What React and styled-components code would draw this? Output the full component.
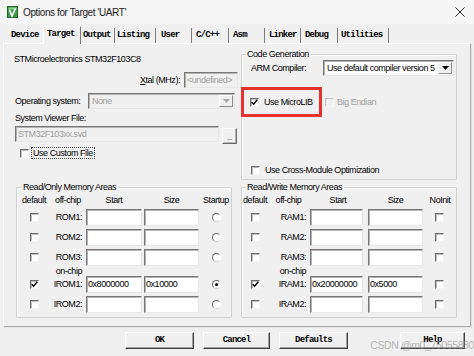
import React from 'react';
import styled, { createGlobalStyle, css } from 'styled-components';

const UI_FONT = `"Liberation Sans", Arial, sans-serif`;
const MONO_FONT = `"Liberation Mono", "Courier New", monospace`;

const GlobalStyle = createGlobalStyle`
  html, body {
    margin: 0;
    padding: 0;
    background: #f0f0f0;
  }
  body {
    font-family: ${UI_FONT};
    font-size: 9px;
    letter-spacing: -0.45px;
    line-height: 11px;
    color: #000;
  }
  * { box-sizing: border-box; }
`;

const Window = styled.div`
  position: relative;
  width: 474px;
  height: 356px;
  background: #f0f0f0;
  display: flex;
  flex-direction: column;
  overflow: hidden;
`;

const TitleBar = styled.div`
  height: 24px;
  flex: none;
  display: flex;
  align-items: center;
  gap: 5px;
  padding: 0 9px 0 7px;
  background: #f5f5f5;
`;

const TitleText = styled.div`
  flex: 1;
  font-size: 10px;
  letter-spacing: -0.4px;
  color: #1a1a1a;
`;

const TabStrip = styled.div`
  height: 19px;
  flex: none;
  display: flex;
  align-items: flex-end;
  padding-left: 8px;
  position: relative;
  z-index: 1;
`;

const Tab = styled.div`
  width: ${p => p.$w}px;
  height: 15px;
  padding-left: ${p => p.$pad ?? 3}px;
  font: bold 9px/14px ${MONO_FONT};
  letter-spacing: -0.8px;
  white-space: pre;
  border-right: 1px solid ${p => (p.$sep ? '#7c7c7c' : 'transparent')};
  ${p => p.$active && css`
    height: 18px;
    line-height: 15px;
    margin-bottom: -1px;
    background: #f0f0f0;
    border-top: 1px solid #fff;
    border-left: 1px solid #fff;
  `}
`;

const Panel = styled.div`
  margin: 0 0 0 3px;
  width: 468px;
  height: 284px;
  flex: none;
  border: 1px solid #a9a9a9;
  border-top-color: #fff;
  border-left-color: #fff;
  box-shadow: 1px 1px 0 #e3e3e3;
  display: grid;
  grid-template-columns: 224px 216px;
  grid-template-rows: 131px 136px;
  column-gap: 3px;
  row-gap: 2px;
  padding: 5px 0 0 10px;
`;

const Column = styled.div`
  display: flex;
  flex-direction: column;
`;

const Text = styled.div`
  line-height: 11px;
  margin-top: ${p => p.$mt ?? 0}px;
  padding-left: ${p => p.$pl ?? 0}px;
  color: ${p => (p.$muted ? '#a2a2a2' : '#000')};
  white-space: nowrap;
`;

const FieldRow = styled.div`
  display: flex;
  align-items: ${p => p.$align ?? 'center'};
  justify-content: ${p => p.$justify ?? 'flex-start'};
  gap: ${p => p.$gap ?? 4}px;
  margin-top: ${p => p.$mt ?? 0}px;
  padding-left: ${p => p.$pl ?? 0}px;
  white-space: nowrap;
`;

const Label = styled.span`
  width: ${p => (p.$w ? `${p.$w}px` : 'auto')};
  flex: none;
  color: ${p => (p.$muted ? '#a2a2a2' : '#000')};
`;

const sunken = css`
  border: 1px solid;
  border-color: #767676 #e6e6e6 #e6e6e6 #767676;
  box-shadow: inset 1px 1px 0 #b4b4b4;
`;

const Input = styled.div`
  ${sunken};
  width: ${p => p.$w}px;
  height: ${p => p.$h ?? 16}px;
  flex: none;
  padding: 1px 0 0 ${p => p.$pl ?? 2}px;
  line-height: 13px;
  background: ${p => (p.$disabled ? '#f0f0f0' : '#fff')};
  color: ${p => (p.$disabled ? '#a0a0a0' : '#000')};
  overflow: hidden;
  white-space: nowrap;
`;

const Select = styled.div`
  ${sunken};
  width: ${p => p.$w}px;
  height: 16px;
  flex: none;
  display: flex;
  align-items: stretch;
  padding-left: 3px;
  background: ${p => (p.$disabled ? '#f0f0f0' : '#fff')};
  color: ${p => (p.$disabled ? '#a0a0a0' : '#000')};
`;

const SelectValue = styled.span`
  flex: 1;
  line-height: 14px;
  overflow: hidden;
`;

const DropButton = styled.span`
  width: 14px;
  flex: none;
  display: flex;
  align-items: center;
  justify-content: center;
  background: #f0f0f0;
  border: 1px solid;
  border-color: #fff #8a8a8a #8a8a8a #fff;
  margin: 1px;
`;

const BrowseButton = styled.div`
  width: 15px;
  height: 16px;
  margin-top: 2px;
  flex: none;
  border: 1px solid;
  border-color: #fff #6a6a6a #6a6a6a #fff;
  box-shadow: inset -1px -1px 0 #b8b8b8;
  text-align: center;
  font-size: 8px;
  line-height: 18px;
  color: #444;
  letter-spacing: -0.5px;
`;

const Box = styled.span`
  width: 9px;
  height: 9px;
  flex: none;
  display: inline-flex;
  align-items: center;
  justify-content: center;
  background: ${p => (p.$disabled ? '#f0f0f0' : '#fff')};
  border: 1px solid;
  border-color: ${p => (p.$disabled ? '#c2c2c2 #f8f8f8 #f8f8f8 #c2c2c2' : '#6c6c6c #f4f4f4 #f4f4f4 #6c6c6c')};
  box-shadow: ${p => (p.$disabled ? 'none' : 'inset 1px 1px 0 #bdbdbd')};
`;

const RadioRing = styled.span`
  width: 9px;
  height: 9px;
  flex: none;
  display: inline-flex;
  align-items: center;
  justify-content: center;
  border-radius: 50%;
  background: #fff;
  border: 1px solid;
  border-color: #6c6c6c #ffffff #d0d0d0 #6c6c6c;
`;

const RadioDot = styled.span`
  width: 3px;
  height: 3px;
  border-radius: 50%;
  background: #000;
`;

const FocusLabel = styled.span`
  border: 1px dotted #4a4a4a;
  padding: 0 1px;
  line-height: 10px;
`;

const Group = styled.fieldset`
  margin: ${p => p.$margin ?? '0'};
  padding: 0 1px ${p => p.$pb ?? 3}px 1px;
  min-width: 0;
  border: 1px solid #d0d0d0;
  border-radius: 1px;
  box-shadow: inset 1px 1px 0 #fff;
  display: flex;
  flex-direction: column;

  legend {
    margin-left: ${p => p.$lm ?? 2}px;
    padding: 0 2px;
    line-height: 11px;
  }
`;

const Highlight = styled.div`
  width: 81px;
  height: 30px;
  margin-left: -2px;
  border: 3px solid #e5322f;
  display: flex;
  align-items: center;
  gap: 5px;
  padding-left: 6px;
`;

const MemGrid = styled.div`
  display: grid;
  grid-template-columns: ${p => p.$cols};
  align-items: center;
  height: ${p => p.$h ?? 17}px;
  margin-top: ${p => p.$mt ?? 3}px;
`;

const Cell = styled.div`
  display: flex;
  justify-content: ${p => p.$justify ?? 'center'};
  padding-right: ${p => p.$pr ?? 0}px;
  white-space: nowrap;
`;

const ButtonBar = styled.div`
  flex: 1;
  display: flex;
  align-items: flex-start;
  gap: 9px;
  padding: 5px 9px 0 125px;
`;

const DialogButton = styled.div`
  width: ${p => p.$w ?? 68}px;
  height: 17px;
  margin-left: ${p => (p.$push ? 'auto' : '0')};
  background: #f0f0f0;
  border: 1px solid;
  border-color: #fff #3f3f3f #3f3f3f #fff;
  box-shadow: inset -1px -1px 0 #a0a0a0;
  font: bold 9px/15px ${MONO_FONT};
  letter-spacing: -0.8px;
  text-align: center;
`;

const Watermark = styled.div`
  position: absolute;
  right: 0;
  bottom: 5px;
  font-size: 10.5px;
  letter-spacing: -0.4px;
  line-height: 12px;
  color: rgba(140, 140, 140, 0.6);
  white-space: nowrap;
`;

const CheckMark = () => (
  <svg width="7" height="7" viewBox="0 0 7 7">
    <path d="M0.8 3.2 L2.6 5.2 L6.3 0.8" fill="none" stroke="#000" strokeWidth="1.4" />
  </svg>
);

const CheckBox = ({ checked, disabled }) => (
  <Box $disabled={disabled}>{checked && <CheckMark />}</Box>
);

const Radio = ({ selected }) => <RadioRing>{selected && <RadioDot />}</RadioRing>;

const Arrow = ({ color = '#000' }) => (
  <svg width="7" height="4" viewBox="0 0 7 4">
    <path d="M0 0 H7 L3.5 4 Z" fill={color} />
  </svg>
);

const AppIcon = () => (
  <svg width="11" height="12" viewBox="0 0 11 12">
    <rect x="0.5" y="0.5" width="10" height="11" fill="#3c9a48" stroke="#1f5f29" />
    <rect x="1.5" y="1.5" width="8" height="2" fill="#8fd08a" />
    <path d="M2.5 4 L5 10 L8.5 2.5" fill="none" stroke="#fff" strokeWidth="1.6" />
  </svg>
);

const CloseIcon = () => (
  <svg width="10" height="10" viewBox="0 0 10 10">
    <path d="M0.5 0.5 L9.5 9.5 M9.5 0.5 L0.5 9.5" stroke="#222" strokeWidth="1" />
  </svg>
);

const tabs = [
  { name: 'Device', w: 35, pad: 3 },
  { name: 'Target', w: 38, pad: 3, active: true, sep: true },
  { name: 'Output', w: 34, pad: 2, sep: true },
  { name: 'Listing', w: 41, pad: 2, sep: true },
  { name: 'User', w: 36, pad: 5, sep: true },
  { name: 'C/C++', w: 37, pad: 4, sep: true },
  { name: 'Asm', w: 36, pad: 4, sep: true },
  { name: 'Linker', w: 36, pad: 4, sep: true },
  { name: 'Debug', w: 37, pad: 4, sep: true },
  { name: 'Utilities', w: 51, pad: 3, sep: true },
];

const romRows = [
  { label: 'ROM1:' },
  { label: 'ROM2:' },
  { label: 'ROM3:' },
  { onChip: true },
  { label: 'IROM1:', checked: true, start: '0x8000000', size: '0x10000', selected: true },
  { label: 'IROM2:' },
];

const ramRows = [
  { label: 'RAM1:' },
  { label: 'RAM2:' },
  { label: 'RAM3:' },
  { onChip: true },
  { label: 'IRAM1:', checked: true, start: '0x20000000', size: '0x5000' },
  { label: 'IRAM2:' },
];

const ROM_COLS = '32px 36px 58px 57px 30px';
const RAM_COLS = '24px 43px 58px 57px 30px';

const MemoryArea = ({ title, rows, cols, lastHeader, startW, margin, lm, isRam }) => (
  <Group $margin={margin} $lm={lm}>
    <legend>{title}</legend>
    <MemGrid $cols={cols} $h={11} $mt={2}>
      <Cell>default</Cell>
      <Cell>off-chip</Cell>
      <Cell $pr={2}>Start</Cell>
      <Cell $pr={2}>Size</Cell>
      <Cell>{lastHeader}</Cell>
    </MemGrid>
    {rows.map((r, i) =>
      r.onChip ? (
        <MemGrid key={i} $cols={cols} $h={10} $mt={0}>
          <Cell />
          <Cell $justify="flex-end" $pr={4}>on-chip</Cell>
        </MemGrid>
      ) : (
        <MemGrid key={i} $cols={cols} $mt={i === 4 ? 0 : 3}>
          <Cell>
            <CheckBox checked={r.checked} />
          </Cell>
          <Cell $justify="flex-end" $pr={4}>{r.label}</Cell>
          <Cell $justify="flex-start">
            <Input $w={startW} $h={17} $pl={1}>{r.start}</Input>
          </Cell>
          <Cell $justify="flex-start">
            <Input $w={55} $h={17} $pl={1}>{r.size}</Input>
          </Cell>
          <Cell $pr={isRam ? 2 : 0}>
            {isRam ? <CheckBox /> : <Radio selected={r.selected} />}
          </Cell>
        </MemGrid>
      )
    )}
  </Group>
);

export default function App() {
  return (
    <Window>
      <GlobalStyle />
      <TitleBar>
        <AppIcon />
        <TitleText>Options for Target 'UART'</TitleText>
        <CloseIcon />
      </TitleBar>

      <TabStrip>
        {tabs.map(t => (
          <Tab key={t.name} $w={t.w} $pad={t.pad} $sep={t.sep} $active={t.active}>
            {t.name}
          </Tab>
        ))}
      </TabStrip>

      <Panel>
        <Column>
          <Text $mt={5}>STMicroelectronics STM32F103C8</Text>
          <FieldRow $justify="flex-end" $mt={7}>
            <Label>
              <u>X</u>tal (MHz):
            </Label>
            <Input $w={54} $disabled>&lt;undefined&gt;</Input>
          </FieldRow>
          <FieldRow $mt={5} $gap={0} $pl={1}>
            <Label $w={73}>Operating system:</Label>
            <Select $w={147} $disabled>
              <SelectValue>None</SelectValue>
              <DropButton>
                <Arrow color="#a8a8a8" />
              </DropButton>
            </Select>
          </FieldRow>
          <Text $mt={4} $pl={1}>System Viewer File:</Text>
          <FieldRow $align="flex-start" $gap={3} $mt={2} $pl={1}>
            <Input $w={204} $disabled>STM32F103xx.svd</Input>
            <BrowseButton>...</BrowseButton>
          </FieldRow>
          <FieldRow $mt={3} $pl={6} $gap={2}>
            <CheckBox />
            <FocusLabel>Use Custom File</FocusLabel>
          </FieldRow>
        </Column>

        <Group>
          <legend>Code Generation</legend>
          <FieldRow $gap={0} $pl={8}>
            <Label $w={72}>ARM Compiler:</Label>
            <Select $w={131}>
              <SelectValue>Use default compiler version 5</SelectValue>
              <DropButton>
                <Arrow />
              </DropButton>
            </Select>
          </FieldRow>
          <FieldRow $mt={11} $gap={3}>
            <Highlight>
              <CheckBox checked />
              <Label>Use MicroLIB</Label>
            </Highlight>
            <CheckBox disabled />
            <Label $muted>Big Endian</Label>
          </FieldRow>
          <FieldRow $mt={48} $pl={8} $gap={5}>
            <CheckBox />
            <Label>Use Cross-Module Optimization</Label>
          </FieldRow>
        </Group>

        <MemoryArea
          title="Read/Only Memory Areas"
          rows={romRows}
          cols={ROM_COLS}
          lastHeader="Startup"
          startW={56}
          margin="0 6px 0 2px"
          lm={3}
        />
        <MemoryArea
          title="Read/Write Memory Areas"
          rows={ramRows}
          cols={RAM_COLS}
          lastHeader="NoInit"
          startW={53}
          isRam
        />
      </Panel>

      <ButtonBar>
        <DialogButton $w={69}>OK</DialogButton>
        <DialogButton $w={67}>Cancel</DialogButton>
        <DialogButton $w={69}>Defaults</DialogButton>
        <DialogButton $w={65} $push>Help</DialogButton>
      </ButtonBar>

      <Watermark>CSDN @m0_75055880</Watermark>
    </Window>
  );
}
